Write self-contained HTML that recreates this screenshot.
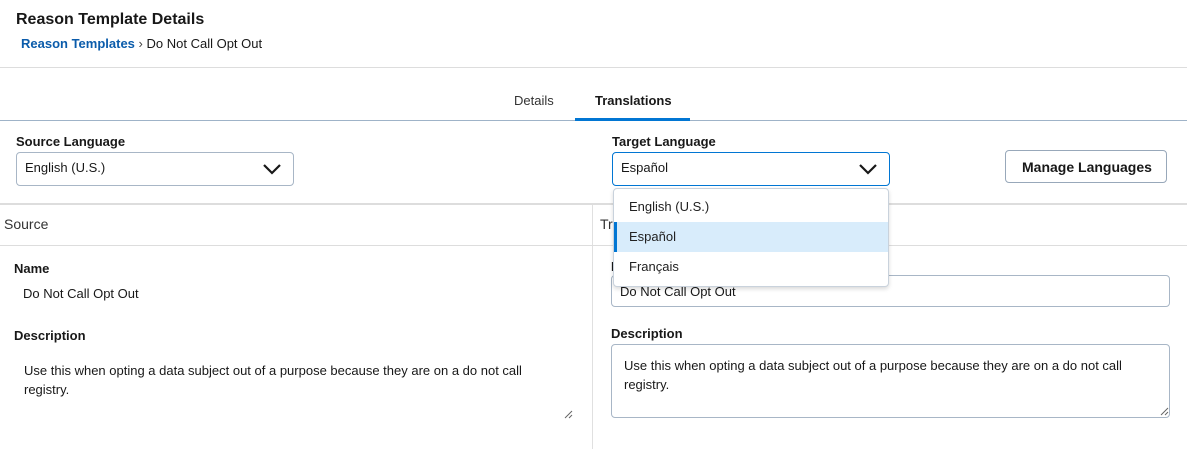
<!DOCTYPE html>
<html><head><meta charset="utf-8"><style>
*{box-sizing:border-box;margin:0;padding:0}
body{width:1187px;height:449px;overflow:hidden;background:#fff;font-family:"Liberation Sans",sans-serif;font-size:13px;color:#181818;position:relative}
.a{position:absolute;white-space:nowrap}
.b{font-weight:bold}
.box{position:absolute;border:1px solid #a8b6c6;border-radius:4px;background:#fff}
.chev{position:absolute;width:20px;height:12px}
</style></head><body>
<div class="a b" style="left:16px;top:11px;font-size:16px">Reason Template Details</div>
<div class="a" style="left:21px;top:36px"><span class="b" style="color:#0b5cab">Reason Templates</span> <span style="color:#444">&rsaquo;</span> Do Not Call Opt Out</div>
<div class="a" style="left:0;top:67px;width:1187px;height:1px;background:#ddd"></div>

<div class="a" style="left:514px;top:93px;color:#333">Details</div>
<div class="a b" style="left:595px;top:93px">Translations</div>
<div class="a" style="left:0;top:120px;width:1187px;height:1px;background:#9fb3c8"></div>
<div class="a" style="left:575px;top:118px;width:115px;height:3px;background:#0176d3"></div>

<div class="a b" style="left:16px;top:134px">Source Language</div>
<div class="box" style="left:16px;top:152px;width:278px;height:34px"></div>
<div class="a" style="left:25px;top:160px">English (U.S.)</div>
<svg class="chev" style="left:262px;top:163px" viewBox="0 0 20 12"><path d="M2 2 L10 10 L18 2" fill="none" stroke="#181818" stroke-width="2.2"/></svg>

<div class="a b" style="left:612px;top:134px">Target Language</div>
<div class="box" style="left:612px;top:152px;width:278px;height:34px;border-color:#0176d3"></div>
<div class="a" style="left:621px;top:160px">Español</div>
<svg class="chev" style="left:858px;top:163px" viewBox="0 0 20 12"><path d="M2 2 L10 10 L18 2" fill="none" stroke="#181818" stroke-width="2.2"/></svg>

<div class="box" style="left:1005px;top:150px;width:162px;height:33px;border-color:#98a8ba"></div>
<div class="a b" style="left:1022px;top:159px;font-size:14px">Manage Languages</div>

<div class="a" style="left:0;top:203px;width:1187px;height:2px;background:#ddd"></div>
<div class="a" style="left:592px;top:205px;width:1px;height:244px;background:#e0e0e0"></div>
<div class="a" style="left:4px;top:216px;font-size:14px;color:#333">Source</div>
<div class="a" style="left:600px;top:216px;font-size:14px;color:#333">Tr</div>
<div class="a" style="left:0;top:245px;width:1187px;height:1px;background:#ddd"></div>

<div class="a b" style="left:14px;top:261px">Name</div>
<div class="a" style="left:23px;top:286px">Do Not Call Opt Out</div>
<div class="a b" style="left:14px;top:328px">Description</div>
<div class="a" style="left:24px;top:361px;line-height:19px;white-space:normal;width:540px">Use this when opting a data subject out of a purpose because they are on a do not call registry.</div>
<svg class="a" style="left:564px;top:410px" width="9" height="9"><path d="M1 8 L8 1 M5 8 L8 5" stroke="#666" stroke-width="1"/></svg>

<div class="a b" style="left:611px;top:259px">Name</div>
<div class="box" style="left:611px;top:275px;width:559px;height:32px"></div>
<div class="a" style="left:620px;top:284px">Do Not Call Opt Out</div>
<div class="a b" style="left:611px;top:326px">Description</div>
<div class="box" style="left:611px;top:344px;width:559px;height:74px"></div>
<div class="a" style="left:624px;top:356px;line-height:19px;white-space:normal;width:540px">Use this when opting a data subject out of a purpose because they are on a do not call registry.</div>
<svg class="a" style="left:1160px;top:407px" width="9" height="9"><path d="M1 8 L8 1 M5 8 L8 5" stroke="#666" stroke-width="1"/></svg>

<div class="a" style="left:613px;top:188px;width:276px;height:99px;background:#fff;border:1px solid #c9d2dc;border-radius:4px;box-shadow:0 2px 4px rgba(0,0,0,.15)"></div>
<div class="a" style="left:614px;top:222px;width:274px;height:30px;background:#d8ecfb"></div>
<div class="a" style="left:614px;top:222px;width:3px;height:30px;background:#0176d3"></div>
<div class="a" style="left:629px;top:199px;color:#222">English (U.S.)</div>
<div class="a" style="left:629px;top:229px;color:#222">Español</div>
<div class="a" style="left:629px;top:259px;color:#222">Français</div>
</body></html>
